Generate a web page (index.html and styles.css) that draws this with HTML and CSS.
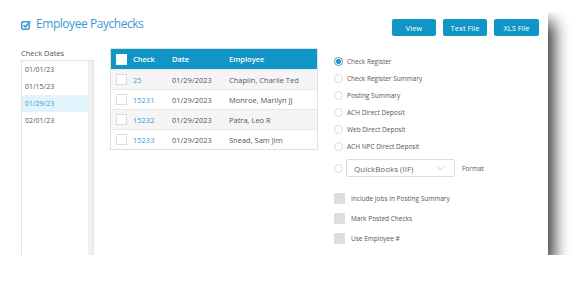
FILE: index.html
```html
<!DOCTYPE html>
<html lang="en">
<head>
    <meta charset="UTF-8">
    <title>Employee Paychecks</title>
    <link rel="stylesheet" href="styles.css">
</head>
<body>
    <div class="card">
        <div class="header">
            <h1 class="title">
                <svg class="title-icon" width="10" height="10" viewBox="0 0 10 10">
                    <rect x="0.8" y="1.8" width="7.4" height="7.4" rx="1" fill="none" stroke="#3b9ad6" stroke-width="1.5"/>
                    <path d="M2.6 5.2 L4.4 7 L9.2 1.4" fill="none" stroke="#3b9ad6" stroke-width="1.7"/>
                </svg>
                Employee Paychecks
            </h1>
            <div class="buttons">
                <button class="btn btn-view">View</button>
                <button class="btn">Text File</button>
                <button class="btn">XLS File</button>
            </div>
        </div>
        <div class="main">
            <div class="dates">
                <div class="dates-label">Check Dates</div>
                <div class="dates-box">
                    <ul class="dates-list">
                        <li>01/01/23</li>
                        <li>01/15/23</li>
                        <li class="selected">01/29/23</li>
                        <li>02/01/23</li>
                    </ul>
                    <div class="scroll-track"></div>
                </div>
            </div>
            <div class="checks">
                <table class="check-table">
                    <thead>
                        <tr>
                            <th class="cb-col"><span class="cb cb-head"></span></th>
                            <th class="check-col">Check</th>
                            <th class="date-col">Date</th>
                            <th>Employee</th>
                        </tr>
                    </thead>
                    <tbody>
                        <tr class="odd">
                            <td><span class="cb"></span></td>
                            <td class="link">25</td>
                            <td>01/29/2023</td>
                            <td>Chaplin, Charlie Ted</td>
                        </tr>
                        <tr>
                            <td><span class="cb"></span></td>
                            <td class="link">15231</td>
                            <td>01/29/2023</td>
                            <td>Monroe, Marilyn JJ</td>
                        </tr>
                        <tr class="odd">
                            <td><span class="cb"></span></td>
                            <td class="link">15232</td>
                            <td>01/29/2023</td>
                            <td>Patra, Leo R</td>
                        </tr>
                        <tr>
                            <td><span class="cb"></span></td>
                            <td class="link">15233</td>
                            <td>01/29/2023</td>
                            <td>Snead, Sam Jim</td>
                        </tr>
                    </tbody>
                </table>
            </div>
            <div class="options">
                <div class="radio-row"><span class="radio checked"></span>Check Register</div>
                <div class="radio-row"><span class="radio"></span>Check Register Summary</div>
                <div class="radio-row"><span class="radio"></span>Posting Summary</div>
                <div class="radio-row"><span class="radio"></span>ACH Direct Deposit</div>
                <div class="radio-row"><span class="radio"></span>Web Direct Deposit</div>
                <div class="radio-row"><span class="radio"></span>ACH NPC Direct Deposit</div>
                <div class="format-row">
                    <span class="radio"></span>
                    <div class="select">
                        <span>QuickBooks (IIF)</span>
                        <svg width="7" height="5" viewBox="0 0 7 5"><path d="M0.5 1 L3.5 4 L6.5 1" fill="none" stroke="#bbb" stroke-width="0.8"/></svg>
                    </div>
                    <span class="format-label">Format</span>
                </div>
                <div class="check-row"><span class="box"></span>Include Jobs in Posting Summary</div>
                <div class="check-row"><span class="box"></span>Mark Posted Checks</div>
                <div class="check-row"><span class="box"></span>Use Employee #</div>
            </div>
        </div>
    </div>
</body>
</html>
```
FILE: styles.css
```css
body {
    margin: 12px 0 0 14px;
    background-color: #ffffff;
    font-family: "Open Sans", sans-serif;
    color: #555;
}
.card {
    width: 534px;
    height: 243px;
    background: white;
    box-shadow: 6px 10px 15px rgba(0, 0, 0, 0.8);
    display: flex;
    flex-direction: column;
}
.header {
    display: flex;
    justify-content: space-between;
    padding: 7px 9px 0 7px;
    height: 17px;
}
.title {
    margin: -2px 0 0 0;
    font-size: 12px;
    letter-spacing: -0.45px;
    font-weight: normal;
    color: #3b9ad6;
    line-height: 14px;
    display: flex;
    align-items: center;
    gap: 5px;
    height: 14px;
}
.title-icon {
    margin-top: 1px;
}
.buttons {
    display: flex;
    gap: 7px;
}
.btn {
    width: 44px;
    height: 17px;
    background-color: #0f95c6;
    color: white;
    border: none;
    border-radius: 2px;
    font-family: "Open Sans", sans-serif;
    font-size: 7.5px;
    padding: 0;
}
.btn:last-child {
    width: 45px;
}
.main {
    flex: 1;
    display: flex;
    padding: 12px 0 0 7px;
}
.dates {
    width: 73px;
    display: flex;
    flex-direction: column;
}
.dates-label {
    font-size: 7.5px;
    color: #555;
    height: 12px;
    line-height: 10px;
}
.dates-box {
    flex: 1;
    display: flex;
    border: 1px solid #e3e3e3;
    border-bottom: none;
}
.dates-list {
    list-style-type: none;
    margin: 0;
    padding: 0;
    flex: 1;
}
.dates-list li {
    height: 17px;
    line-height: 17px;
    font-size: 7px;
    padding-left: 3px;
    color: #555;
}
.dates-list li.selected {
    background: #e1f4fc;
    color: #3d9bd0;
}
.scroll-track {
    width: 5px;
    background: #efefef;
}
.checks {
    margin-left: 16px;
    width: 208px;
}
.check-table {
    width: 208px;
    border-collapse: collapse;
    border: 1px solid #e0e0e0;
    font-size: 7.5px;
}
.check-table th {
    background-color: #0f95c6;
    color: white;
    text-align: left;
    height: 20px;
    padding: 0;
    font-weight: 600;
}
.check-table td {
    height: 19px;
    padding: 0;
    border-top: 1px solid #e8e8e8;
    color: #555;
}
.check-table tr.odd td {
    background: #f5f5f5;
}
.check-table td.link {
    color: #3d9bd0;
}
.cb-col {
    width: 22px;
}
.check-col {
    width: 39px;
}
.date-col {
    width: 57px;
}
.cb {
    display: block;
    width: 9px;
    height: 9px;
    margin-left: 5px;
    border: 1px solid #dcdcdc;
    background: white;
}
.cb-head {
    width: 11px;
    height: 11px;
    border: none;
}
.options {
    margin-left: 16px;
    padding-top: 5px;
    font-size: 6.5px;
    color: #555;
}
.radio-row {
    display: flex;
    align-items: center;
    height: 17px;
    gap: 4px;
}
.radio {
    display: inline-block;
    width: 7px;
    height: 7px;
    border-radius: 50%;
    border: 1px solid #dadada;
    background: white;
}
.radio.checked {
    border-color: #3b9ad6;
    background: radial-gradient(circle, #2d8fd5 0, #2d8fd5 2.2px, white 2.6px);
}
.format-row {
    display: flex;
    align-items: center;
    gap: 3px;
    margin-top: 4px;
    margin-bottom: 11px;
}
.select {
    border: 1px solid #ddd;
    border-radius: 2px;
    display: flex;
    align-items: center;
    justify-content: space-between;
    padding: 0 10px 0 7px;
    box-sizing: border-box;
    width: 109px;
    height: 18px;
    font-size: 8px;
    color: #666;
}
.format-label {
    margin-left: 4px;
}
.check-row {
    display: flex;
    align-items: center;
    height: 20px;
    gap: 6px;
}
.box {
    width: 11px;
    height: 11px;
    background: #dedede;
}
```
